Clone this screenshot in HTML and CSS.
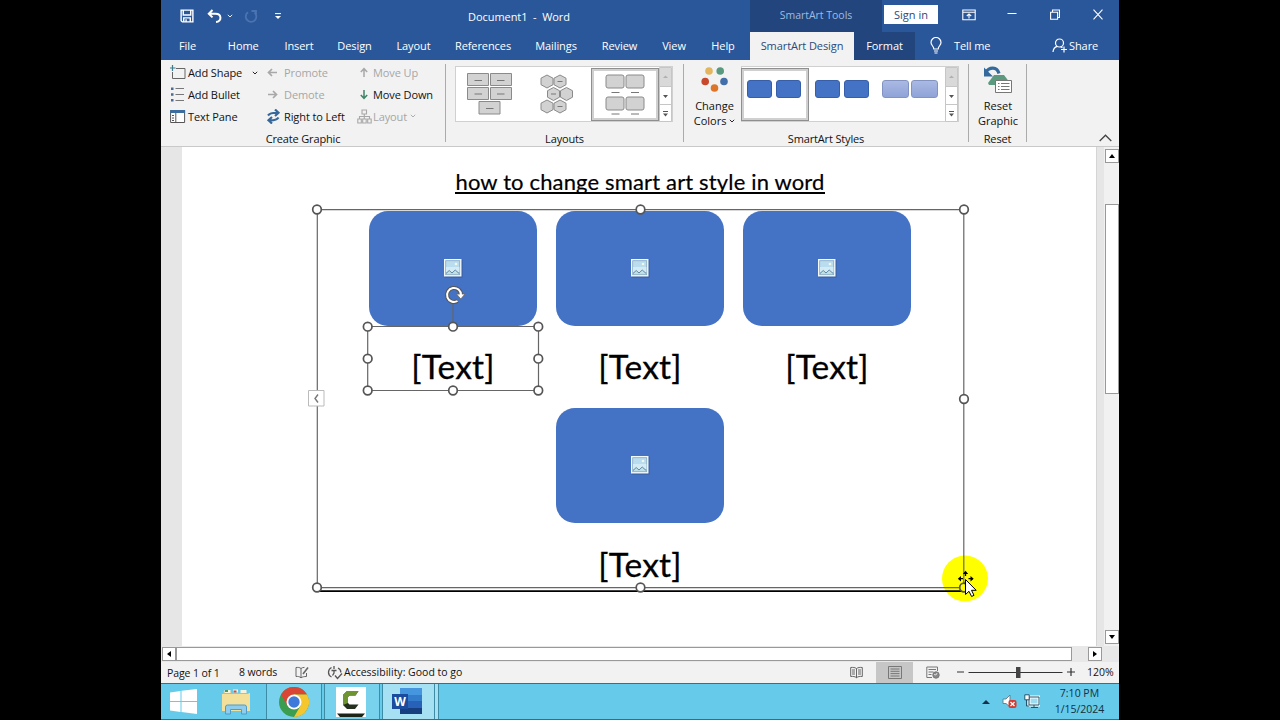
FILE: index.html
```html
<!DOCTYPE html>
<html lang="en">
<head>
  <meta charset="UTF-8" />
  <meta name="viewport" content="width=device-width, initial-scale=1.0" />
  <title>Document1 - Word</title>
  <link rel="stylesheet" href="styles.css">
</head>
<body>
  <!-- shared symbols -->
  <svg class="defs" width="0" height="0">
    <symbol id="picture" viewBox="0 0 20 20">
      <rect x="1.500" y="1.500" width="18" height="18" fill="#2f4f86" opacity=".6"/>
      <rect x="1" y="1" width="17.500" height="17.500" fill="#f4fafc"/>
      <rect x="2.700" y="2.700" width="14" height="14" fill="#b9dcef" stroke="#86a9bd" stroke-width=".8"/>
      <path d="M3 9h13.400v5H3z" fill="#d3ebf5"/>
      <circle cx="13" cy="6" r="1.300" fill="#f3f7e6"/>
      <path d="M3 15.500l3.200-3 2.800 2.500 3.200-3 4 3.500" fill="#c3e2e4" stroke="#557f9f" stroke-width=".9"/>
    </symbol>
    <symbol id="chev" viewBox="0 0 6 4"><path d="M.8.8L3 3 5.200.8" fill="none" stroke="currentColor" stroke-width=".9"/></symbol>
    <symbol id="grip" viewBox="0 0 13 55">
      <path d="M.5.5h12v54H.5z" fill="#fff" stroke="#c6c6c6"/>
      <path d="M1 1h11v18H1z" fill="#d9d9d9"/>
      <path d="M0 19.500h13M0 37.500h13" stroke="#c6c6c6"/>
      <path d="M4 11h5L6.500 8.500z" fill="#b0b0b0"/>
      <path d="M4 28h5l-2.500 3zM4 46.500h5l-2.500 3z" fill="#555"/>
      <path d="M4 44.500h5" stroke="#555"/>
    </symbol>
  </svg>

  <div class="window">
    <!-- Title bar -->
    <header class="titlebar">
      <div class="quick">
        <svg class="q-save" width="14" height="14" viewBox="0 0 15 15" fill="none" stroke="#fff" stroke-width="1.500"><path d="M1.200 1.200h12.600v12.600H2.500l-1.300-1.300zM3.500 1.500v5h8v-5M4 14v-4.500h7V14M6.500 11v2.500"/></svg>
        <svg class="q-undo" width="15" height="15" viewBox="0 0 15 15" fill="none" stroke="#fff" stroke-width="2"><path d="M5.500 1L1.800 4.700l3.700 3.700M2 4.700h6.500c6.500 0 6.500 8 .5 8.300"/></svg>
        <svg class="q-chev" width="6" height="4"><use href="#chev"/></svg>
        <svg class="q-redo" width="14" height="15" viewBox="0 0 14 15" fill="none" stroke="#4c73b0" stroke-width="1.800"><path d="M4 3.200a5.300 5.300 0 1 0 6.500.3M7.500 2h4.500v4.500"/></svg>
        <svg class="q-more" width="6" height="7" viewBox="0 0 6 7"><path d="M0 .6h6" stroke="#fff"/><path d="M0 3h6L3 6z" fill="#fff"/></svg>
      </div>
      <div class="doc-title">Document1&nbsp; -&nbsp; Word</div>
      <div class="tools-title">SmartArt Tools</div>
      <button class="signin">Sign in</button>
      <div class="winbtns">
        <svg width="14" height="12" viewBox="0 0 14 12" fill="none" stroke="#fff" stroke-width="1.100"><path d="M.8 1h12.400v9.800H.8zM.8 3.200h12.400M7 9.500V5M4.800 7L7 4.900 9.200 7"/></svg>
        <svg width="10" height="12" viewBox="0 0 10 12"><path d="M.5 4.500h9" stroke="#fff"/></svg>
        <svg width="10" height="12" viewBox="0 0 10 12" fill="none" stroke="#fff" stroke-width="1.100"><path d="M.6 3.200h7v7h-7zM2.500 3V1h7v7.500h-2"/></svg>
        <svg width="10" height="12" viewBox="0 0 10 12"><path d="M.5.700l9 9.600M9.500.700l-9 9.600" stroke="#fff" stroke-width="1.100"/></svg>
      </div>
    </header>

    <!-- Ribbon tabs -->
    <nav class="tabs">
      <a>File</a><a>Home</a><a>Insert</a><a>Design</a><a>Layout</a><a>References</a><a>Mailings</a><a>Review</a><a>View</a><a>Help</a>
      <a class="active">SmartArt Design</a><a class="ctx">Format</a>
      <div class="tell">
        <svg width="12" height="17" viewBox="0 0 12 17" fill="none" stroke="#fff" stroke-width="1.200"><path d="M3.800 12C3.800 9 1 8.500 1 5.500a5 5 0 0 1 10 0c0 3-2.800 3.500-2.800 6.500zM4 14h4M4.500 16h3"/></svg>
        <span>Tell me</span>
      </div>
      <div class="share">
        <svg width="16" height="15" viewBox="0 0 16 15" fill="none" stroke="#fff" stroke-width="1.200"><circle cx="7.500" cy="5" r="4"/><path d="M1 14c.3-3.500 2-5 4.200-5.600M8.500 8.800l2 1M12 8.500v6M9 11.500h6"/></svg>
        <span>Share</span>
      </div>
    </nav>

    <!-- Ribbon -->
    <section class="ribbon">
      <div class="group create">
        <div class="cmds">
          <div class="cmd">
            <svg width="16" height="15" viewBox="0 0 16 15" fill="none"><path d="M6 3.500h9v10H2.500V7" stroke="#666"/><path d="M2.500 0v6M0 3h5.500" stroke="#3c7a8c" stroke-width="1.200"/></svg>
            <span>Add Shape</span><svg class="drop" width="6" height="4"><use href="#chev"/></svg>
          </div>
          <div class="cmd off">
            <svg width="16" height="15" viewBox="0 0 16 15" fill="none" stroke="#a8a8a8" stroke-width="1.700"><path d="M11 7.500H3M6 4L2.500 7.500 6 11"/></svg>
            <span>Promote</span>
          </div>
          <div class="cmd off up">
            <svg width="16" height="15" viewBox="0 0 16 15" fill="none" stroke="#a8a8a8" stroke-width="1.500"><path d="M7 12V4M3.800 7L7 3.700 10.200 7"/></svg>
            <span>Move Up</span>
          </div>
          <div class="cmd">
            <svg width="16" height="15" viewBox="0 0 16 15"><path d="M1 .5h2.500V3H1zM1 6.300h2.500v2.500H1zM1 12h2.500v2.500H1z" fill="#4a6b93"/><path d="M5.500 1.500H14M5.500 7.500H14M5.500 13.500H14" stroke="#777"/></svg>
            <span>Add Bullet</span>
          </div>
          <div class="cmd off">
            <svg width="16" height="15" viewBox="0 0 16 15" fill="none" stroke="#a8a8a8" stroke-width="1.700"><path d="M2 7.500h8M7 4l3.500 3.500L7 11"/></svg>
            <span>Demote</span>
          </div>
          <div class="cmd up">
            <svg width="16" height="15" viewBox="0 0 16 15" fill="none" stroke="#3f8468" stroke-width="1.500"><path d="M7 3v8M3.800 8L7 11.300 10.200 8"/></svg>
            <span>Move Down</span>
          </div>
          <div class="cmd">
            <svg width="16" height="15" viewBox="0 0 16 15"><path d="M.6 1.500h14v12H.6z" fill="#fff" stroke="#555"/><path d="M.2 1h14.900v3H.2z" fill="#3d6d9c"/><path d="M5.800 4v9.500M2 6.500h2M2 9h2M2 11.500h2" stroke="#555"/></svg>
            <span>Text Pane</span>
          </div>
          <div class="cmd">
            <svg width="16" height="15" viewBox="0 0 16 15" fill="none" stroke="#35679b" stroke-width="2.200"><path d="M2 6.500C4 4 7 3.500 12 3.800M9 .5l3.500 3.300L9 7M12.500 8.500c-1.500 2.500-4.500 3-9.500 2.800M6 8l-3.500 3.300L6 14.500"/></svg>
            <span>Right to Left</span>
          </div>
          <div class="cmd off up">
            <svg width="16" height="15" viewBox="0 0 16 15" fill="none" stroke="#a8a8a8" stroke-width="1.100"><path d="M5 1h4.500v4H5zM.8 10h3.500v4H.8zM5.700 10h3.500v4H5.700zM10.700 10h3.500v4h-3.500zM7.300 5v5M2.500 10V7.500h10V10"/></svg>
            <span>Layout</span><svg class="drop near" width="6" height="4"><use href="#chev"/></svg>
          </div>
        </div>
        <div class="label">Create Graphic</div>
      </div>

      <div class="group layouts">
        <div class="gallery">
          <div class="thumb">
            <svg width="46" height="43" viewBox="0 0 46 43"><g fill="#d2d2d2" stroke="#8a8a8a"><path d="M.5.5h21v12H.5zM23.500.5h21v12h-21zM.5 14.500h21v12H.5zM23.500 14.500h21v12h-21zM12 28.500h21v12.500H12z"/></g><path d="M7.500 7.500H15M30 7.500h7.500M7.500 21H15M30 21h7.500M19 35.500h7.500" stroke="#777"/></svg>
          </div>
          <div class="thumb">
            <svg width="34" height="40" viewBox="0 0 34 40"><g fill="#d2d2d2" stroke="#8a8a8a"><path id="hex" d="M7 1l6 3.200v6.500L7 14l-6-3.300V4.200z"/><use href="#hex" x="13"/><use href="#hex" x="6.500" y="12.500"/><use href="#hex" x="19.500" y="12.500"/><use href="#hex" y="25"/><use href="#hex" x="13" y="25"/></g><path d="M17.500 7.500h5M11 20h5M17.500 32.500h5" stroke="#777"/></svg>
          </div>
          <div class="thumb on">
            <svg width="40" height="42" viewBox="0 0 40 42"><g fill="#d2d2d2" stroke="#8a8a8a"><rect x="1" y="1" width="18" height="13" rx="2"/><rect x="21" y="1" width="18" height="13" rx="2"/><rect x="1" y="23" width="18" height="13" rx="2"/><rect x="21" y="23" width="18" height="13" rx="2"/></g><path d="M6.500 18.500h8M26 18.500h8M6.500 40h8M26 40h8" stroke="#777"/></svg>
          </div>
          <svg class="grip" width="13" height="55"><use href="#grip"/></svg>
        </div>
        <div class="label">Layouts</div>
      </div>

      <div class="group styles">
        <div class="row">
          <div class="big colors">
            <svg width="28" height="28" viewBox="0 0 28 28"><circle cx="8" cy="5" r="3.800" fill="#e2b55e"/><circle cx="19.200" cy="5" r="3.800" fill="#589a80"/><circle cx="4.200" cy="15.500" r="3.800" fill="#c8482c"/><circle cx="23" cy="15.500" r="3.800" fill="#416faa"/><circle cx="13.500" cy="22" r="3.800" fill="#de7428"/></svg>
            <div>Change<br>Colors <svg width="6" height="4"><use href="#chev"/></svg></div>
          </div>
          <div class="gallery">
            <div class="thumb on"><i></i><i></i></div>
            <div class="thumb flat"><i></i><i></i></div>
            <div class="thumb pale"><i></i><i></i></div>
            <svg class="grip" width="13" height="55"><use href="#grip"/></svg>
          </div>
        </div>
        <div class="label">SmartArt Styles</div>
      </div>

      <div class="group reset">
        <div class="big">
          <svg width="30" height="28" viewBox="0 0 30 28"><path d="M5 17l6-8h10l6 8v2H6z" fill="#5c9a80"/><path d="M3 6C6 1 14 0 16 7.500" fill="none" stroke="#34699b" stroke-width="3.200"/><path d="M1 1.500v9h9z" fill="#34699b"/><path d="M12.500 14.500h16v12h-16z" fill="#fff" stroke="#777"/><path d="M15 17.500h1.500M15 20.500h1.500M15 23.500h1.500M18 17.500h8.500M18 20.500h8.500M18 23.500h8.500" stroke="#777"/></svg>
          <div>Reset<br>Graphic</div>
        </div>
        <div class="label">Reset</div>
      </div>
      <svg class="collapse" width="13" height="8" viewBox="0 0 13 8"><path d="M.7 7l5.800-5.800L12.300 7" fill="none" stroke="#444" stroke-width="1.300"/></svg>
    </section>

    <!-- Document -->
    <main class="work">
      <div class="page">
        <h1>how to change smart art style in word</h1>
        <!-- canvas: 0,0 is the page's top left corner -->
        <div class="node n1"><svg width="20" height="20"><use href="#picture"/></svg></div>
        <div class="node n2"><svg width="20" height="20"><use href="#picture"/></svg></div>
        <div class="node n3"><svg width="20" height="20"><use href="#picture"/></svg></div>
        <div class="node n4"><svg width="20" height="20"><use href="#picture"/></svg></div>
        <div class="cap n1">[Text]</div>
        <div class="cap n2">[Text]</div>
        <div class="cap n3">[Text]</div>
        <div class="cap n4">[Text]</div>
        <svg class="frame" width="914" height="499" viewBox="182 147 914 499">
          <circle cx="965" cy="578.500" r="23" fill="#ff0"/>
          <path d="M317 591.200H966" stroke="#000" stroke-width="1.800"/>
          <g fill="none" stroke="#666" stroke-width="1.200">
            <path d="M317.300 209.600h646.500v378H317.300z"/>
            <path d="M367.700 326.500h170.800v64H367.700z"/>
            <path d="M453 302v20"/>
          </g>
          <g fill="#fff" stroke="#555" stroke-width="1.700">
            <circle cx="317" cy="209.500" r="4.300"/><circle cx="640.500" cy="209.500" r="4.300"/><circle cx="964" cy="209.500" r="4.300"/>
            <circle cx="964" cy="399" r="4.300"/><circle cx="317" cy="587.500" r="4.300"/><circle cx="640.500" cy="587.500" r="4.300"/>
            <circle cx="964" cy="587.500" r="4.300" fill="#ff0"/>
            <circle cx="367.700" cy="326.700" r="4.300"/><circle cx="453" cy="326.700" r="4.300"/><circle cx="538.300" cy="326.700" r="4.300"/>
            <circle cx="367.700" cy="358.700" r="4.300"/><circle cx="538.300" cy="358.700" r="4.300"/>
            <circle cx="367.700" cy="390.500" r="4.300"/><circle cx="453" cy="390.500" r="4.300"/><circle cx="538.300" cy="390.500" r="4.300"/>
          </g>
          <!-- rotate handle -->
          <g fill="none"><path d="M457.500 301a7 7 0 1 1 3.500-6" stroke="#555" stroke-width="4"/><path d="M456.500 294h8.500l-4.200 5z" fill="#fff" stroke="#666" stroke-width=".8"/><path d="M457.500 301a7 7 0 1 1 3.500-6" stroke="#fff" stroke-width="2"/></g>
          <!-- text pane toggle -->
          <path d="M308.500 390.500h15.500v15.500h-15.500z" fill="#fff" stroke="#bbb"/>
          <path d="M318 394.500l-3 4 3 4" fill="none" stroke="#777" stroke-width="1.400"/>
          <!-- mouse pointer -->
          <path d="M965.500 572v13M959 578.700h13.500" stroke="#000" stroke-width="1.300" stroke-dasharray="4 5.500 4"/>
          <path d="M962.800 574l2.700-3.200 2.700 3.200zM961 576l-3.200 2.700 3.200 2.700zM970.500 576l3.200 2.700-3.200 2.700z"/>
          <path d="M965.500 579.500v15l3.500-3.200 2.600 5.200 2.400-1.200-2.500-5h4.700z" fill="#fff" stroke="#000"/>
        </svg>
      </div>
      <div class="vscroll">
        <span class="sb"><svg width="8" height="4" viewBox="0 0 8 4"><path d="M1 4h6L4 0z"/></svg></span>
        <span class="vthumb"></span>
        <span class="sb"><svg width="8" height="4" viewBox="0 0 8 4"><path d="M1 0h6L4 4z"/></svg></span>
      </div>
    </main>

    <div class="hscroll">
      <span class="sb"><svg width="4" height="8" viewBox="0 0 4 8"><path d="M4 1v6L0 4z"/></svg></span>
      <span class="hthumb"></span>
      <span class="sb"><svg width="4" height="8" viewBox="0 0 4 8"><path d="M0 1v6l4-3z"/></svg></span>
    </div>

    <!-- Status bar -->
    <div class="status">
      <span class="pg">Page 1 of 1</span>
      <span class="wc">8 words</span>
      <svg class="proof" width="14" height="13" viewBox="0 0 14 13" fill="none" stroke="#666"><path d="M6 2.500C4.500 1.300 3 1.300 1 1.500v9c2-.2 3.500 0 5 1.300zM6 2.500C7 1.700 8 1.400 9.500 1.400M6 11.800c1.500-1 3-1.300 5.500-1.300V7"/><path d="M8 8l5-6.500" stroke-width="1.600"/></svg>
      <svg class="acc" width="16" height="14" viewBox="0 0 16 14" fill="none" stroke="#555" stroke-width="1.300"><path d="M4.500 1.500C.5 3.500.5 9 4.500 11M7 0v3M4.500 4.500h5M7 4.500V7l-1.500 2.500M11 2c2 1 3 3 2.800 4.500M8 9.500l2.500 3 4.500-5"/></svg>
      <span class="ok">Accessibility: Good to go</span>
      <div class="views">
        <svg width="13" height="13" viewBox="0 0 13 13" fill="none" stroke="#666"><path d="M6.500 2.500C5 1.500 3 1.200.7 1.500v9c2.300-.3 4.300 0 5.800 1.200 1.500-1.200 3.500-1.500 5.800-1.200v-9C10 1.200 8 1.500 6.500 2.500zV12M2 4h3M2 6h3M2 8h3M8 4h3M8 6h3M8 8h3"/></svg>
        <span class="view-on"><svg width="14" height="13" viewBox="0 0 14 13" fill="none" stroke="#777"><path d="M.5.5h13v12H.5zM2.500 3h9M2.500 5.300h9M2.500 7.600h9M2.500 10h9"/></svg></span>
        <svg width="14" height="13" viewBox="0 0 14 13" fill="none" stroke="#777"><path d="M11.500 5V1H.8v10.500H6M2.500 3.500H10M2.500 6h5M2.500 8.500h3"/><circle cx="10" cy="9" r="3.200" fill="#888"/><path d="M8 8.500l2 .5 1-2" stroke="#ddd"/></svg>
      </div>
      <svg class="zoom" width="120" height="11" viewBox="0 0 120 11"><path d="M1 5h7M12.500 5.500h94M111 5h8M115 1v8" stroke="#333" stroke-width="1.200"/><path d="M60 0h4.500v11H60z" fill="#444"/></svg>
      <span class="pct">120%</span>
    </div>

    <!-- Taskbar -->
    <footer class="taskbar">
      <div class="app start"><svg width="27" height="25" viewBox="0 0 27 25" fill="#fff"><path d="M0 3.500L10.500 2v10H0zM11.500 1.800L27 0v12H11.500zM0 13h10.500v10L0 21.500zM11.500 13H27v12l-15.500-2z"/></svg></div>
      <div class="app files"><svg width="30" height="27" viewBox="0 0 30 27"><path d="M2 3h7l2 2h15v18H2z" fill="#d8b765"/><path d="M3.500 2h6v3h-6zM12 1.500h5v3h-5zM19.500 2h6v3h-6z" fill="#f6f3dc"/><path d="M4 2h3v2H4z" fill="#4b9b50"/><path d="M12.500 2.500h3v2h-3z" fill="#cf4f42"/><path d="M1 6h25l3-1v18H1z" fill="#f3e09a"/><path d="M4.500 26v-7q0-2 2-2h17q2 0 2 2v7h-5v-4.500h-11V26z" fill="#8ecdee" stroke="#4f9cc8"/></svg></div>
      <div class="app chrome"><svg width="30" height="30" viewBox="0 0 30 30"><circle cx="15" cy="15" r="15" fill="#3b9d50"/><path d="M2 7.500A15 15 0 0 1 28 7.500H15L8.500 18.700z" fill="#da4636"/><path d="M28 7.500A15 15 0 0 1 15 30l6.500-11.300L15 7.500z" fill="#f6c62f"/><circle cx="15" cy="15" r="7.500" fill="#fff"/><circle cx="15" cy="15" r="5.700" fill="#3f79da"/></svg></div>
      <div class="app cam"><svg width="30" height="30" viewBox="0 0 30 30"><path d="M0 0h30v30H0z" fill="#fff"/><path d="M22.500 4H11L7 8v10l4 4h8l3.500-4.500h-9L12 16V10l1.500-1.500h6z" fill="#24311e"/><path d="M11 4h11.500l-3 4.500h-6L12 10v6l-5 2V8z" fill="#6f9531"/><path d="M1 26.500h28L26 30H4z" fill="#1c2418"/></svg></div>
      <div class="app word"><svg width="31" height="27" viewBox="0 0 31 27"><path d="M8 0h22v26H8z" fill="#2762b8"/><path d="M8 0h22v7H8z" fill="#4596df"/><path d="M8 7h22v6H8z" fill="#337bcb"/><path d="M8 20h22v6H8z" fill="#173f80"/><path d="M0 6h16v15H0z" fill="#1b4b9c"/><text x="8" y="17.500" text-anchor="middle" class="w">W</text></svg></div>
      <div class="app stack"></div>
      <div class="tray">
        <svg width="8" height="4" viewBox="0 0 8 4"><path d="M0 4h8L4 0z" fill="#16324a"/></svg>
        <svg class="vol" width="15" height="15" viewBox="0 0 15 15"><path d="M1 5h3l4-4v12l-4-3.500H1z" fill="#fff" stroke="#647883" stroke-width=".9"/><rect x="6.500" y="6" width="8" height="8" rx="2" fill="#d53a30"/><path d="M8.500 8l4 4M12.500 8l-4 4" stroke="#fff" stroke-width="1.300"/></svg>
        <svg class="net" width="16" height="15" viewBox="0 0 16 15"><path d="M5 3h10v8H5z" fill="#9cdcf0" stroke="#fff" stroke-width="3"/><path d="M5 3h10v8H5zM7 13.500h7M10 11v2M2.500 6v6H5" fill="none" stroke="#24536a"/><path d="M.8.8h4.400v5H.8z" fill="#fff" stroke="#24536a"/></svg>
        <div class="clock">7:10 PM<br>1/15/2024</div>
      </div>
    </footer>
  </div>
</body>
</html>
```
FILE: styles.css
```css
/* === Variables === */
:root{
  --blue:#2a579a;
  --ctx:#21457c;
  --ribbon:#f2f2f2;
  --shape:#4472c4;
  --ui:"Open Sans","Noto Sans",sans-serif;
}

/* === Base === */
*{box-sizing:border-box}
body{margin:0;background:#000;font:11px/15px var(--ui);color:#111;display:flex;justify-content:center;height:720px;overflow:hidden}
svg{display:block;flex:none}
.defs{position:absolute}
.window{width:958px;height:720px;display:flex;flex-direction:column;white-space:nowrap;overflow:hidden}

/* === Title bar === */
.titlebar{height:32px;flex:none;background:var(--blue);color:#fff;display:flex;align-items:center}
.quick{width:289px;display:flex;align-items:center;padding-left:19px}
.q-undo{margin-left:13px}
.q-chev{margin-left:5px}
.q-redo{margin-left:11px}
.q-more{margin-left:17px}
.doc-title{width:138px;text-align:center;font-size:11px;letter-spacing:-.05px;padding-top:1px}
.tools-title{width:132px;height:32px;line-height:30px;margin-left:162px;text-align:center;background:var(--ctx);color:#9fbbe2;font-size:10.5px;letter-spacing:-.02px}
.signin{width:54px;height:19px;margin:-3px 0 0 2px;padding:0;border:0;background:#fff;color:#2b4a7c;font:11px/19px var(--ui)}
.winbtns{display:flex;align-items:center;margin:-3px 0 0 24px}
.winbtns svg:nth-child(2){margin-left:31px}
.winbtns svg:nth-child(3){margin-left:33px}
.winbtns svg:nth-child(4){margin-left:33px}

/* === Tabs === */
.tabs{height:28px;flex:none;background:var(--blue);color:#fff;display:grid;grid-template-columns:53px 58.500px 53px 58px 60px 79px 67px 60px 49px 49px 2.500px 104px 61px 139px 1fr;line-height:27px;text-align:center;letter-spacing:-.08px}
.tabs .active{grid-column:12;background:var(--ribbon);color:#2b4a7c}
.tabs .ctx{background:var(--ctx)}
.tell,.share{display:flex;align-items:center;height:27px}
.tell{padding-left:15px;gap:12px}
.share{gap:1px;margin-left:-2px}

/* === Ribbon === */
.ribbon{height:87px;flex:none;background:var(--ribbon);border-bottom:1px solid #c9c9c9;display:flex;position:relative;padding-top:4px}
.group{height:78px;border-right:1px solid #ababab;display:flex;flex-direction:column;justify-content:space-between}
.label{text-align:center;line-height:14px;margin-bottom:-4px;letter-spacing:-.15px}
.create{width:285px}
.cmds{display:grid;grid-template-columns:96px 91px 1fr;grid-auto-rows:21.7px;padding-left:9px;margin-top:-2px}
.cmd{display:flex;align-items:center;gap:2px;letter-spacing:-.1px}
.cmd.up{gap:0}
.off{color:#a6a6a6}
.drop{margin-left:8px}
.drop.near{margin-left:3px}
.layouts{width:238px}
.gallery{width:218px;height:56px;margin:2px 0 0 9px;background:#fff;border:1px solid #d0d0d0;display:flex}
.thumb{width:68px;display:flex;align-items:center;justify-content:center}
.layouts .thumb.on{width:69px}
.thumb.on{height:53px;width:68px;border:1px solid #8f8f8f;box-shadow:inset 0 0 0 2px #d0d0d0;margin-top:1px}
.grip{margin-left:auto}
.styles{width:285px}
.row{display:flex}
.row .gallery{margin-left:0}
.styles .on{margin-left:-1px}
.styles .thumb{gap:4px;padding:0 2px 10px 0}
.styles .on.thumb{padding-bottom:11px}
.styles i{width:25px;height:18px;border-radius:3px;background:var(--shape);border:1px solid #365ea9}
.styles .pale{gap:2px}
.styles .pale i{width:27px;background:linear-gradient(#aab9e4,#8fa3d7);border-color:#8393c1}
.big{display:flex;flex-direction:column;align-items:center;text-align:center;width:57px;padding-top:2px;line-height:15px;gap:4px}
.big div svg{display:inline-block;vertical-align:2px}
.colors{padding-left:4px}
.reset{width:58px}
.reset .big{padding-left:1px}
.collapse{position:absolute;right:7px;bottom:4px}

/* === Document === */
.work{height:499px;flex:none;background:#e6e6e6;display:flex;padding-left:21px}
.page{width:915px;background:#fff;border-right:1px solid #d5d5d5;position:relative}
h1{font:400 22px/26px Lato,sans-serif;letter-spacing:.15px;color:#000;width:370px;margin:22px auto 0 273px;height:25px;text-align:center;border-bottom:2px solid #000;-webkit-text-stroke:.2px #000}
.node{position:absolute;width:168px;height:115px;border-radius:19px;background:var(--shape);display:flex;align-items:center;justify-content:center;padding-bottom:1px}
.cap{position:absolute;width:168px;text-align:center;font:33.500px/40px Lato,sans-serif;letter-spacing:.2px;color:#000;-webkit-text-stroke:.3px #000}
.n1{left:187px}
.n2,.n4{left:374px}
.n3{left:561px}
.node{top:64px}
.cap{top:199px}
.node.n4{top:261px}
.cap.n4{top:397px}
.frame{position:absolute;left:0;top:0}

/* === Scroll bars === */
.sb{width:14px;height:14px;flex:none;background:#fff;border:1px solid #999;display:flex;align-items:center;justify-content:center}
.vscroll{width:15px;margin-left:7px;background:#f1f1f1;display:flex;flex-direction:column;padding:2px 0 2px 1px}
.vthumb{height:190px;width:14px;margin:41px 0 236px;background:#fff;border:1px solid #999}
.hscroll{height:16px;flex:none;background:#e8e8e8;display:flex;align-items:center;padding-left:1px}
.hthumb{width:896px;height:14px;margin-right:16px;background:#fff;border:1px solid #999}

/* === Status bar === */
.status{height:21px;flex:none;background:#f2f2f2;display:flex;align-items:center;padding-left:6px;font-size:10.5px}
.pg{width:72px;padding-top:1px;letter-spacing:-.1px}
.wc{width:56px;letter-spacing:-.1px}
.acc{margin-left:18px}
.ok{margin-left:1px;width:120px}
.views{display:flex;align-items:center;gap:13px;margin-left:auto}
.view-on{width:37px;height:21px;background:#c6c6c6;display:flex;align-items:center;justify-content:center}
.zoom{margin-left:16px}
.pct{width:43px;padding-left:11px}

/* === Taskbar === */
.taskbar{height:37px;flex:none;background:#66cbea;border-top:1px solid #3c6f80;border-bottom:1px solid #2f7187;display:flex}
.app{display:flex;align-items:center;justify-content:center;border-right:1px solid transparent}
.start{width:45px}
.files{width:61px;border-right-color:#3d8ba4}
.chrome{width:55px;background:#79d2ed;border-right-color:#3d8ba4}
.cam{width:56px;margin-left:2px;padding-right:2px;background:#79d2ed;border:solid #3d8ba4;border-width:0 1px}
.word{width:53px;margin-left:2px;padding-right:2px;background:#a5e1f3;border:solid #3d8ba4;border-width:0 1px}
.stack{width:4px;background:#a5e1f3;border-right-color:#3d8ba4}
.word .w{font:700 12px "Open Sans",sans-serif;fill:#fff}
.tray{margin-left:auto;display:flex;align-items:center;color:#12303f}
.vol{margin-left:12px}
.net{margin-left:7px}
.clock{width:79px;text-align:center;line-height:16px;font-size:10.5px;margin-top:-1px}
```
